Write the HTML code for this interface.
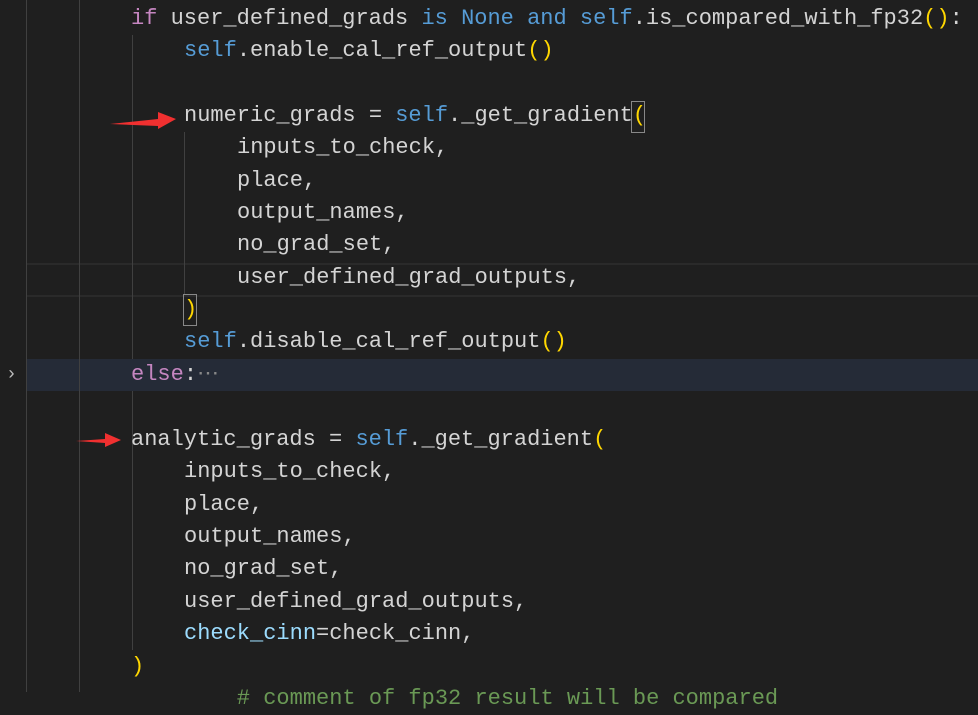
<!DOCTYPE html>
<html><head><meta charset="utf-8"><style>
body{margin:0;width:978px;height:692px;background:#1f1f1f;overflow:hidden;position:relative;font-family:"Liberation Mono",monospace;font-size:22px;color:#d4d4d4}
.l{position:absolute;white-space:pre;height:32px;line-height:32px}
.g{position:absolute;width:1px;background:#404040}
.k{color:#c586c0}.b{color:#569cd6}.y{color:#ffd700}.v{color:#9cdcfe}.c{color:#6a9955}
</style></head><body>
<div style="position:absolute;left:26px;top:263px;width:952px;height:30px;border-top:2px solid #2a2a2a;border-bottom:2px solid #2a2a2a"></div>
<div style="position:absolute;left:26px;top:359px;width:952px;height:32px;background:#252b37"></div>
<div class="g" style="left:26px;top:0;height:692px"></div>
<div class="g" style="left:79px;top:0;height:692px"></div>
<div class="g" style="left:132px;top:35px;height:324px"></div>
<div class="g" style="left:132px;top:391px;height:259px"></div>
<div class="g" style="left:184px;top:132px;height:162px"></div>
<div style="position:absolute;left:631px;top:101px;width:12px;height:30px;border:1px solid #888"></div>
<div style="position:absolute;left:183px;top:294px;width:12px;height:30px;border:1px solid #888"></div>
<div class="l" style="left:6px;top:359px;color:#bbb;font-size:18px">›</div>
<div class="l" style="left:131px;top:3px"><span class="k">if</span> user_defined_grads <span class="b">is</span> <span class="b">None</span> <span class="b">and</span> <span class="b">self</span>.is_compared_with_fp32<span class="y">()</span>:</div>
<div class="l" style="left:184px;top:35px"><span class="b">self</span>.enable_cal_ref_output<span class="y">()</span></div>
<div class="l" style="left:184px;top:100px">numeric_grads = <span class="b">self</span>._get_gradient<span class="y">(</span></div>
<div class="l" style="left:237px;top:132px">inputs_to_check,</div>
<div class="l" style="left:237px;top:165px">place,</div>
<div class="l" style="left:237px;top:197px">output_names,</div>
<div class="l" style="left:237px;top:229px">no_grad_set,</div>
<div class="l" style="left:237px;top:262px">user_defined_grad_outputs,</div>
<div class="l" style="left:184px;top:294px"><span class="y">)</span></div>
<div class="l" style="left:184px;top:326px"><span class="b">self</span>.disable_cal_ref_output<span class="y">()</span></div>
<div class="l" style="left:131px;top:359px"><span class="k">else</span>:<span style="color:#888">⋯</span></div>
<div class="l" style="left:131px;top:424px">analytic_grads = <span class="b">self</span>._get_gradient<span class="y">(</span></div>
<div class="l" style="left:184px;top:456px">inputs_to_check,</div>
<div class="l" style="left:184px;top:489px">place,</div>
<div class="l" style="left:184px;top:521px">output_names,</div>
<div class="l" style="left:184px;top:553px">no_grad_set,</div>
<div class="l" style="left:184px;top:586px">user_defined_grad_outputs,</div>
<div class="l" style="left:184px;top:618px"><span class="v">check_cinn</span>=check_cinn,</div>
<div class="l" style="left:131px;top:651px"><span class="y">)</span></div>
<div class="l c" style="left:184px;top:683px">    # comment of fp32 result will be compared</div>
<svg style="position:absolute;left:0;top:0" width="978" height="692">
<polygon points="110,124 158,119 158,112 176,119 158,129 158,126" fill="#f03030"/>
<polygon points="76,441 105,439 105,433 121,440 105,447 105,443" fill="#f03030"/>
</svg>
</body></html>
